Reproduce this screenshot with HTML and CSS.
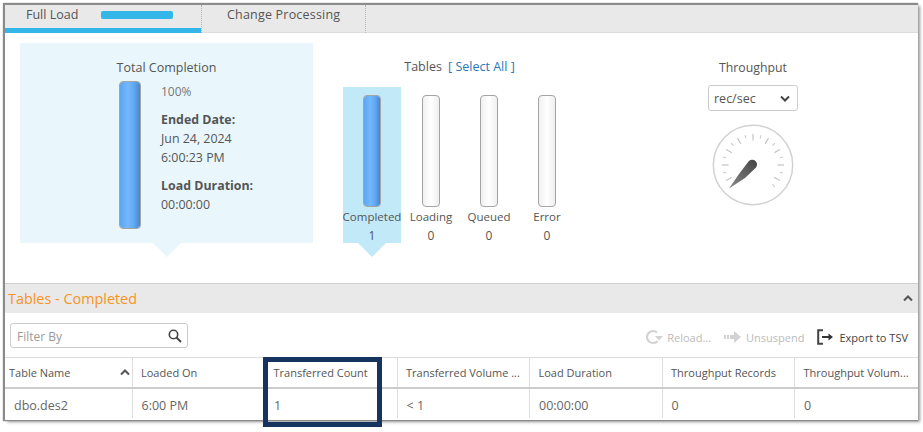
FILE: index.html
```html
<!DOCTYPE html>
<html lang="en">
<head>
    <meta charset="UTF-8">
    <title>Full Load</title>
    <link rel="stylesheet" href="styles.css">
</head>
<body>
    <div class="frame">
        <div class="tabs">
            <div class="tab active">
                <span class="tab-name">Full Load</span>
                <span class="tab-progress"></span>
            </div>
            <div class="tab second"><span class="tab-name">Change Processing</span></div>
        </div>

        <div class="summary">
            <div class="total">
                <div class="total-title">Total Completion</div>
                <div class="total-body">
                    <div class="bar bar-total fill"></div>
                    <div class="total-info">
                        <div class="percent">100%</div>
                        <div class="info-label">Ended Date:</div>
                        <div class="info-line">Jun 24, 2024</div>
                        <div class="info-line">6:00:23 PM</div>
                        <div class="info-label">Load Duration:</div>
                        <div class="info-line">00:00:00</div>
                    </div>
                </div>
            </div>

            <div class="tables">
                <div class="tables-title">Tables <a class="select-all">[ Select All ]</a></div>
                <div class="bars">
                    <div class="bar-col selected">
                        <div class="bar fill"></div>
                        <div class="bar-label">Completed</div>
                        <div class="bar-count">1</div>
                    </div>
                    <div class="bar-col">
                        <div class="bar"></div>
                        <div class="bar-label">Loading</div>
                        <div class="bar-count">0</div>
                    </div>
                    <div class="bar-col">
                        <div class="bar"></div>
                        <div class="bar-label">Queued</div>
                        <div class="bar-count">0</div>
                    </div>
                    <div class="bar-col">
                        <div class="bar"></div>
                        <div class="bar-label">Error</div>
                        <div class="bar-count">0</div>
                    </div>
                </div>
            </div>

            <div class="throughput">
                <div class="throughput-title">Throughput</div>
                <div class="unit-select">
                    <span>rec/sec</span>
                    <svg width="10" height="7" viewBox="0 0 10 7"><path d="M1 1.500l4 4 4-4" fill="none" stroke="#444" stroke-width="2"/></svg>
                </div>
                <svg class="gauge" width="82" height="82" viewBox="0 0 82 82">
                    <defs>
                        <path id="tick-long" d="M41 10v6.500" stroke="#c4c4c4" stroke-width="1.200"/>
                        <path id="tick-short" d="M41 10v3.500" stroke="#c8c8c8" stroke-width="1"/>
                        <linearGradient id="needle" x1="0" y1="1" x2="1" y2="0">
                            <stop offset="0" stop-color="#8a8a8a"/>
                            <stop offset="1" stop-color="#444"/>
                        </linearGradient>
                    </defs>
                    <circle cx="41" cy="41" r="39.700" fill="#fff" stroke="#d2d2d2" stroke-width="1.500"/>
                    <use href="#tick-long"/>
                    <use href="#tick-long" transform="rotate(30 41 41)"/>
                    <use href="#tick-long" transform="rotate(60 41 41)"/>
                    <use href="#tick-long" transform="rotate(90 41 41)"/>
                    <use href="#tick-long" transform="rotate(120 41 41)"/>
                    <use href="#tick-long" transform="rotate(-30 41 41)"/>
                    <use href="#tick-long" transform="rotate(-60 41 41)"/>
                    <use href="#tick-long" transform="rotate(-90 41 41)"/>
                    <use href="#tick-long" transform="rotate(-120 41 41)"/>
                    <use href="#tick-short" transform="rotate(15 41 41)"/>
                    <use href="#tick-short" transform="rotate(45 41 41)"/>
                    <use href="#tick-short" transform="rotate(75 41 41)"/>
                    <use href="#tick-short" transform="rotate(105 41 41)"/>
                    <use href="#tick-short" transform="rotate(135 41 41)"/>
                    <use href="#tick-short" transform="rotate(-15 41 41)"/>
                    <use href="#tick-short" transform="rotate(-45 41 41)"/>
                    <use href="#tick-short" transform="rotate(-75 41 41)"/>
                    <use href="#tick-short" transform="rotate(-105 41 41)"/>
                    <path d="M17 64.500L27 50L36.500 37.500a4.800 4.800 0 0 1 7.500 6L33 54z" fill="url(#needle)"/>
                </svg>
            </div>
        </div>

        <div class="section-head">
            <span class="section-title">Tables - Completed</span>
            <svg width="10" height="7" viewBox="0 0 10 7"><path d="M1 5.500l4-4 4 4" fill="none" stroke="#555" stroke-width="2"/></svg>
        </div>

        <div class="toolbar">
            <div class="filter">
                <span class="filter-text">Filter By</span>
                <svg width="14" height="14" viewBox="0 0 14 14"><circle cx="5.500" cy="5.500" r="4.200" fill="none" stroke="#444" stroke-width="1.600"/><path d="M8.500 8.500l4.500 4.500" stroke="#444" stroke-width="2"/></svg>
            </div>
            <div class="actions">
                <span class="action disabled">
                    <svg width="18" height="16" viewBox="0 0 18 16"><path d="M12.500 12A6 6 0 1 1 12 3.500" fill="none" stroke="#d2d2d2" stroke-width="2.200"/><path d="M10 7h8l-4 4.500z" fill="#d2d2d2"/></svg>
                    Reload...
                </span>
                <span class="action disabled">
                    <svg width="18" height="12" viewBox="0 0 18 12"><path d="M0 4h2v4H0zM3 4h2v4H3zM6 4h4V0l7 6-7 6V8H6z" fill="#d2d2d2"/></svg>
                    Unsuspend
                </span>
                <span class="action">
                    <svg width="18" height="16" viewBox="0 0 18 16"><path d="M6 1.200H1.200v13.600H6" fill="none" stroke="#444" stroke-width="2"/><path d="M5 8h8" stroke="#333" stroke-width="2"/><path d="M11.500 4.500L16 8l-4.500 3.500z" fill="#333"/></svg>
                    Export to TSV
                </span>
            </div>
        </div>

        <table class="grid">
            <colgroup>
                <col class="c1"><col class="c2"><col class="c2"><col class="c2"><col class="c2"><col class="c2"><col>
            </colgroup>
            <thead>
                <tr>
                    <th>
                        <div class="sorted">Table Name
                            <svg width="10" height="7" viewBox="0 0 10 7"><path d="M1 5.500l4-4 4 4" fill="none" stroke="#555" stroke-width="2"/></svg>
                        </div>
                    </th>
                    <th>Loaded On</th>
                    <th>Transferred Count</th>
                    <th>Transferred Volume ...</th>
                    <th>Load Duration</th>
                    <th>Throughput Records</th>
                    <th>Throughput Volum...</th>
                </tr>
            </thead>
            <tbody>
                <tr>
                    <td class="name">dbo.des2</td>
                    <td>6:00 PM</td>
                    <td>1</td>
                    <td>&lt; 1</td>
                    <td>00:00:00</td>
                    <td>0</td>
                    <td>0</td>
                </tr>
            </tbody>
        </table>
    </div>

    <!-- highlight drawn over the screenshot -->
    <div class="callout"></div>
</body>
</html>
```

FILE: styles.css
```css
html, body {
    margin: 0;
    height: 432px;
    overflow: hidden;
    background: #fff;
}
body {
    font-family: "Open Sans", sans-serif;
    font-size: 12px;
    color: #555;
    position: relative;
}
.frame {
    margin: 4px 0 0 5px;
    width: 913px;
    height: 415px;
    background: #fff;
    border-top: 1px solid #8c8c8c;
    box-shadow: -1px 0 1px 1px #8a8a8a, 2px 2px 3px #999;
    display: flex;
    flex-direction: column;
}

.tabs {
    display: flex;
    box-sizing: border-box;
    height: 28px;
    background: #e9e9e9;
    flex: none;
    border-bottom: 1px solid #ddd;
}
.tab {
    box-sizing: border-box;
    width: 196px;
    height: 28px;
    padding: 1px 0 0 21px;
    display: flex;
    gap: 23px;
    border-right: 1px dotted #b5b5b5;
    font-size: 12.5px;
}
.tab.active {
    border-bottom: 5px solid #35b6e8;
    border-right: none;
}
.tab.second {
    width: 165px;
    padding-left: 25px;
    border-left: 1px dotted #b5b5b5;
    letter-spacing: 0.2px;
}
.tab-progress {
    width: 72px;
    height: 8px;
    margin-top: 5px;
    background: #35b6e8;
    border-radius: 2px;
}

.summary {
    height: 250px;
    flex: none;
    display: flex;
    box-sizing: border-box;
    padding: 10px 0 0 15px;
}
.total {
    width: 293px;
    height: 200px;
    background: #e9f7fc;
    position: relative;
    flex: none;
    box-sizing: border-box;
    padding-top: 16px;
}
.total::after, .selected::after {
    content: "";
    position: absolute;
    top: 100%;
    left: 50%;
    margin-left: -14px;
    border: 14px solid transparent;
    border-bottom: none;
    border-top-color: #e9f7fc;
}
.total-title {
    text-align: center;
    font-size: 12.5px;
    line-height: 18px;
}
.total-body {
    display: flex;
    padding: 4px 0 0 99px;
    gap: 20px;
}
.bar {
    box-sizing: border-box;
    flex: none;
    width: 18px;
    height: 112px;
    border: 1px solid #a4a4a4;
    border-radius: 4px;
    background: linear-gradient(to right, #f0f0f0, #fff 50%, #efefef);
    background-clip: padding-box;
}
.bar.fill {
    background: linear-gradient(to right, #5ba6f0, #74b8ff 40%, #60a8f4 70%, #4a85c8);
    background-clip: padding-box;
}
.bar-total {
    width: 22px;
    height: 148px;
}
.total-info {
    padding-top: 1px;
    line-height: 19px;
    font-size: 12.4px;
}
.percent {
    color: #777;
    font-size: 12px;
    margin-bottom: 9px;
}
.info-label {
    font-weight: 700;
}
.info-line + .info-label {
    margin-top: 9px;
}

.tables {
    margin-left: 30px;
    width: 233px;
    flex: none;
}
.tables-title {
    text-align: center;
    line-height: 18px;
    margin-top: 15px;
    font-size: 12.5px;
}
.select-all {
    color: #2a78b8;
    margin-left: 3px;
}
.bars {
    display: flex;
    margin-top: 11px;
}
.bar-col {
    flex: none;
    width: 58px;
    height: 156px;
    box-sizing: border-box;
    padding-top: 8px;
    display: flex;
    flex-direction: column;
    align-items: center;
    position: relative;
    white-space: nowrap;
}
.selected {
    background: #c2e9f8;
    margin-right: 1px;
}
.selected::after {
    border-top-color: #c2e9f8;
}
.bar-label {
    line-height: 19px;
    font-size: 11.5px;
}
.bar-count {
    line-height: 19px;
}

.throughput {
    margin-left: 132px;
    width: 90px;
    display: flex;
    flex-direction: column;
    align-items: center;
    flex: none;
}
.throughput-title {
    margin-top: 16px;
    line-height: 18px;
    font-size: 12.3px;
}
.unit-select {
    box-sizing: border-box;
    width: 90px;
    height: 26px;
    margin-top: 8px;
    padding: 0 7px 0 5px;
    border: 1px solid #ccc;
    border-radius: 3px;
    font-size: 12.5px;
    display: flex;
    align-items: center;
    justify-content: space-between;
}
.gauge {
    margin-top: 13px;
}

.section-head {
    box-sizing: border-box;
    height: 30px;
    flex: none;
    background: #e9e9e9;
    border-top: 1px solid #d0d0d0;
    padding: 0 5px 0 3px;
    display: flex;
    align-items: center;
    justify-content: space-between;
}
.section-title {
    color: #f7941d;
    font-size: 14.4px;
}

.toolbar {
    height: 44px;
    flex: none;
    box-sizing: border-box;
    padding: 10px 10px 0 5px;
    display: flex;
    justify-content: space-between;
}
.filter {
    box-sizing: border-box;
    width: 178px;
    height: 25px;
    border: 1px solid #ccc;
    border-radius: 3px;
    padding: 0 5px 0 6px;
    color: #999;
    display: flex;
    align-items: center;
    justify-content: space-between;
}
.filter-text {
    padding-top: 2px;
}
.actions {
    display: flex;
    gap: 13px;
    height: 25px;
    padding-top: 2px;
    align-items: center;
    font-size: 11px;
}
.action {
    display: flex;
    align-items: center;
    gap: 4px;
    color: #444;
}
.action svg {
    margin-top: -2px;
}
.action.disabled {
    color: #bbb;
}

.grid {
    border-collapse: collapse;
    table-layout: fixed;
    width: 100%;
}
.c1 { width: 127px; }
.c2 { width: 132.5px; }
.grid th {
    font-weight: 400;
    font-size: 11px;
    text-align: left;
    height: 29px;
    padding: 0 0 0 8.5px;
    border-top: 1px solid #ddd;
    border-bottom: 2px solid #ccc;
    border-right: 1px solid #ddd;
    white-space: nowrap;
    overflow: hidden;
}
.grid th:first-child {
    padding-left: 4px;
}
.grid th:last-child, .grid td:last-child {
    border-right: none;
}
.sorted {
    display: flex;
    justify-content: space-between;
    align-items: center;
    padding-right: 2px;
}
.grid td {
    height: 30px;
    box-sizing: border-box;
    padding: 3px 0 0 9px;
    border-right: 1px solid #ddd;
    color: #666;
    font-size: 12.5px;
}
.callout {
    position: absolute;
    left: 263px;
    top: 357px;
    width: 109px;
    height: 60px;
    border: 5px solid #17335f;
}
```
